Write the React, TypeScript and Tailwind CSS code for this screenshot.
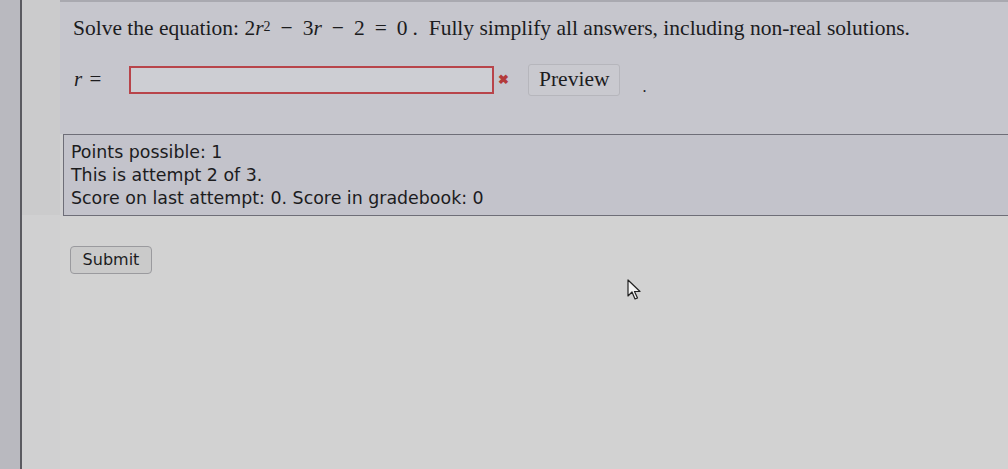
import React from "react";

const serif = { fontFamily: '"Liberation Serif", "Times New Roman", serif' };
const sans = { fontFamily: '"DejaVu Sans", Verdana, sans-serif' };

function Cursor() {
  return (
    <svg width="14" height="22" viewBox="0 0 14 22" className="absolute left-[627px] top-[279px]">
      <path d="M1 1 L1 17 L5 13 L8 20 L10.5 19 L7.5 12.5 L13 12.5 Z" fill="#f4f4f4" stroke="#222" strokeWidth="1.2" strokeLinejoin="round" />
    </svg>
  );
}

export default function App() {
  return (
    <div className="relative flex w-[1008px] h-[469px] overflow-hidden bg-[#d0d0d1] text-[#1c1c1e]">
      {/* left strip */}
      <div className="w-[22px] shrink-0 bg-[#b9b9bf] border-r-2 border-[#5a5a60]" />
      <div className="w-[38px] shrink-0 flex flex-col">
        <div className="h-[215px] bg-[#cbcbcc]" />
        <div className="flex-1" />
      </div>

      <div className="flex-1 flex flex-col">
        {/* question */}
        <div className="bg-[#c6c6cd] border-t-2 border-[#a9a9b0] pl-[13px] pt-[12px] h-[134px]">
          <p className="text-[21.5px] leading-[28px] whitespace-nowrap" style={serif}>
            Solve the equation:{" "}
            <span>
              2<i>r</i>
              <sup className="text-[14px] relative -top-[4px]">2</sup>
              <span className="mx-[10px]">−</span>3<i>r</i>
              <span className="mx-[10px]">−</span>2<span className="mx-[10px]">=</span>0
            </span>
            <span className="ml-[5px]">.&nbsp; Fully simplify all answers, including non-real solutions.</span>
          </p>

          <div className="flex items-center mt-[19px]">
            <span className="w-[56px] text-[21px] pl-[1px]" style={serif}>
              <i>r</i> <span className="ml-[2px]">=</span>
            </span>
            <div className="w-[365px] h-[28px] border-2 border-[#b8444a] bg-[#cdced3]" />
            <span className="ml-[4px] text-[13px] font-bold text-[#b33a3a]" style={serif}>✖</span>
            <button
              className="ml-[19px] h-[32px] px-[10px] border border-[#b6b6bc] rounded-[3px] bg-[#c9c9cf] text-[21.5px] leading-none"
              style={serif}
            >
              Preview
            </button>
            <span className="ml-[22px] mt-[14px] text-[16px]" style={serif}>.</span>
          </div>
        </div>

        {/* points box */}
        <div
          className="ml-[3px] h-[82px] border-t border-l border-b border-[#6e6e78] bg-[#c3c3cb] pl-[7px] pt-[6px] text-[17.4px] leading-[23px]"
          style={sans}
        >
          <div>Points possible: 1</div>
          <div>This is attempt 2 of 3.</div>
          <div>Score on last attempt: 0. Score in gradebook: 0</div>
        </div>

        <div className="flex-1 bg-[#d2d2d2] pl-[10px] pt-[30px]">
          <button
            className="h-[28px] w-[82px] border border-[#9a9a9e] rounded-[4px] bg-[#cacaca] text-[16px] leading-none"
            style={sans}
          >
            Submit
          </button>
        </div>
      </div>

      <Cursor />
    </div>
  );
}
